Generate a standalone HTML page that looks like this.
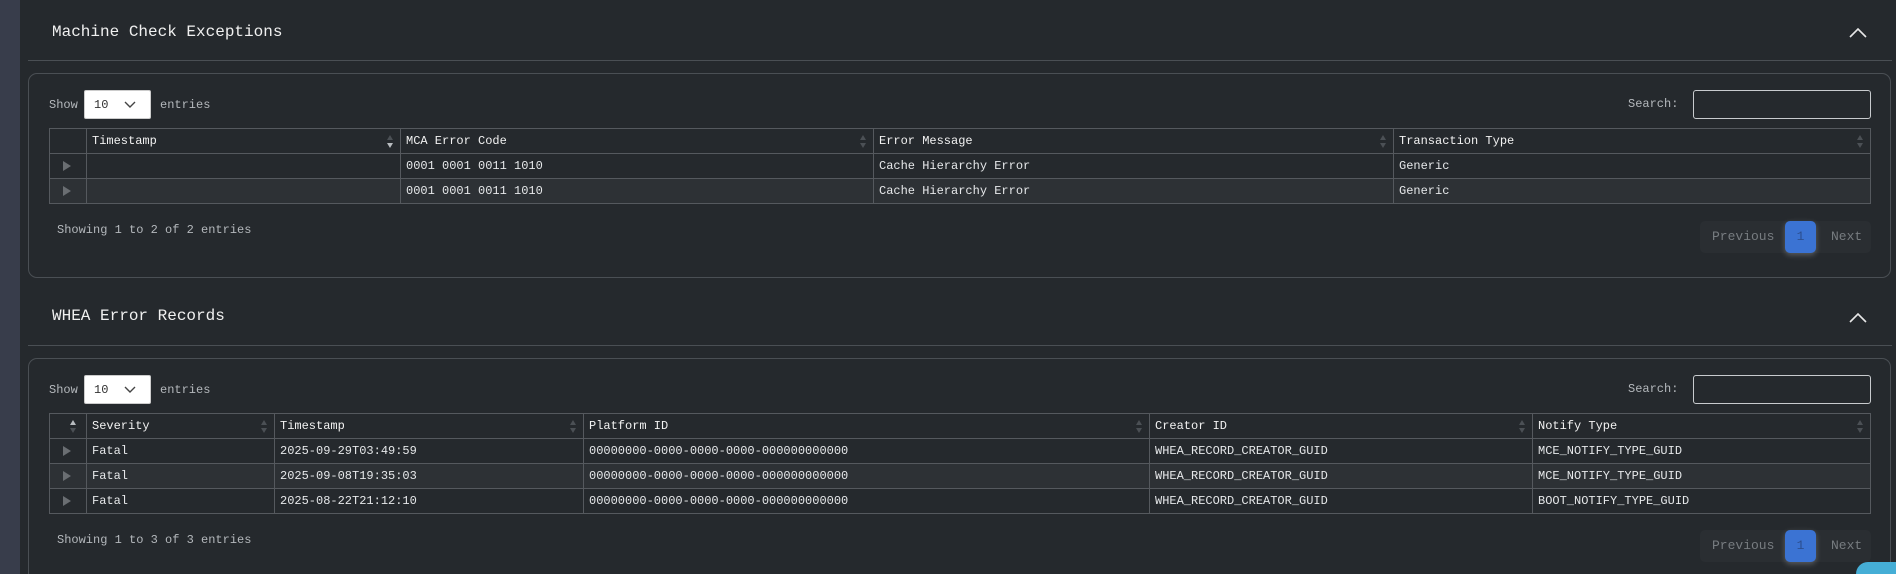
<!DOCTYPE html>
<html><head><style>
*{box-sizing:border-box;margin:0;padding:0}
html,body{width:1896px;height:574px;overflow:hidden}
body{background:#25292d;font-family:"Liberation Mono",monospace;color:#e6e8ea}
#wrap{position:relative;width:1896px;height:574px;overflow:hidden}
.side{position:absolute;left:0;top:0;width:20px;height:574px;background:#383d4b}
.abs{position:absolute}
.title{font-size:16px;color:#f0f0f0;left:52px}
.rule{left:28px;width:1864px;height:1px;background:#4a4f54}
.card{left:28px;width:1863px;border:1px solid #4a4f54;border-radius:9px}
.lbl{font-size:12px;color:#b4b8bc}
.sel{background:#fff;border:1px solid #ccc;border-radius:2px;width:67px;height:29px;color:#333;font-size:12px;padding:7px 0 0 9px}
.sel svg{position:absolute;right:14px;top:10px}
.inp{border:1px solid #c8cbce;border-radius:3px;width:178px;height:29px}
table{position:absolute;border-collapse:collapse;font-size:12px;table-layout:fixed}
td,th{border:1px solid #55595e;height:25px;padding:0 5px;text-align:left;font-weight:normal;white-space:nowrap;position:relative}
th{color:#f2f2f2}
tr.alt td{background:#2d3135}
.tri{width:0;height:0;border-left:8px solid #6a6e72;border-top:5px solid transparent;border-bottom:5px solid transparent;margin-left:8px}
.s{position:absolute;right:6px;top:6px;width:7px;height:13px}
.s:before{content:"";position:absolute;top:0;left:0;border-left:3.5px solid transparent;border-right:3.5px solid transparent;border-bottom:5px solid #4b5055}
.s:after{content:"";position:absolute;bottom:0;left:0;border-left:3.5px solid transparent;border-right:3.5px solid transparent;border-top:5px solid #4b5055}
.s.dn:after{border-top-color:#b8bcc0}
.s.up:before{border-bottom-color:#b8bcc0}
.pag{width:171px;height:32px;background:#2a2e32;border-radius:5px;font-size:13px;color:#777c80}
.pag span{position:absolute;top:8px}
.pag .one{left:85px;top:0;width:31px;height:32px;background:#3b73d3;border-radius:5px;color:#2c4f8f;text-align:center;padding-top:8px;box-shadow:0 2px 6px rgba(255,255,255,.25)}
</style></head><body><div id="wrap">
<div class="side"></div>

<div class="abs title" style="top:23px">Machine Check Exceptions</div>
<svg class="abs" style="left:1849px;top:27px" width="18" height="11"><path d="M1 10 L9 2 L17 10" fill="none" stroke="#e8e8e8" stroke-width="1.6"/></svg>
<div class="abs rule" style="top:60px"></div>
<div class="abs card" style="top:73px;height:205px"></div>
<div class="abs lbl" style="left:49px;top:98px">Show</div>
<div class="abs sel" style="left:84px;top:90px">10<svg width="12" height="8"><path d="M1 1 L6 6 L11 1" fill="none" stroke="#444" stroke-width="1.4"/></svg></div>
<div class="abs lbl" style="left:160px;top:98px">entries</div>
<div class="abs lbl" style="left:1628px;top:97px">Search:</div>
<div class="abs inp" style="left:1693px;top:90px"></div>
<table style="left:49px;top:128px;width:1822px">
<colgroup><col style="width:37px"><col style="width:314px"><col style="width:473px"><col style="width:520px"><col></colgroup>
<tr><th></th><th>Timestamp<i class="s dn"></i></th><th>MCA Error Code<i class="s"></i></th><th>Error Message<i class="s"></i></th><th>Transaction Type<i class="s"></i></th></tr>
<tr><td><div class="tri"></div></td><td></td><td>0001 0001 0011 1010</td><td>Cache Hierarchy Error</td><td>Generic</td></tr>
<tr class="alt"><td><div class="tri"></div></td><td></td><td>0001 0001 0011 1010</td><td>Cache Hierarchy Error</td><td>Generic</td></tr>
</table>
<div class="abs lbl" style="left:57px;top:223px">Showing 1 to 2 of 2 entries</div>
<div class="abs pag" style="left:1700px;top:221px"><span style="left:12px">Previous</span><div class="abs one">1</div><span style="left:131px">Next</span></div>

<div class="abs title" style="top:307px">WHEA Error Records</div>
<svg class="abs" style="left:1849px;top:312px" width="18" height="11"><path d="M1 10 L9 2 L17 10" fill="none" stroke="#e8e8e8" stroke-width="1.6"/></svg>
<div class="abs rule" style="top:345px"></div>
<div class="abs card" style="top:358px;height:216px;border-bottom:none;border-radius:9px 9px 0 0"></div>
<div class="abs lbl" style="left:49px;top:383px">Show</div>
<div class="abs sel" style="left:84px;top:375px">10<svg width="12" height="8"><path d="M1 1 L6 6 L11 1" fill="none" stroke="#444" stroke-width="1.4"/></svg></div>
<div class="abs lbl" style="left:160px;top:383px">entries</div>
<div class="abs lbl" style="left:1628px;top:382px">Search:</div>
<div class="abs inp" style="left:1693px;top:375px"></div>
<table style="left:49px;top:413px;width:1822px">
<colgroup><col style="width:37px"><col style="width:188px"><col style="width:309px"><col style="width:566px"><col style="width:383px"><col></colgroup>
<tr><th><i class="s up" style="right:9px"></i></th><th>Severity<i class="s"></i></th><th>Timestamp<i class="s"></i></th><th>Platform ID<i class="s"></i></th><th>Creator ID<i class="s"></i></th><th>Notify Type<i class="s"></i></th></tr>
<tr><td><div class="tri"></div></td><td>Fatal</td><td>2025-09-29T03:49:59</td><td>00000000-0000-0000-0000-000000000000</td><td>WHEA_RECORD_CREATOR_GUID</td><td>MCE_NOTIFY_TYPE_GUID</td></tr>
<tr class="alt"><td><div class="tri"></div></td><td>Fatal</td><td>2025-09-08T19:35:03</td><td>00000000-0000-0000-0000-000000000000</td><td>WHEA_RECORD_CREATOR_GUID</td><td>MCE_NOTIFY_TYPE_GUID</td></tr>
<tr><td><div class="tri"></div></td><td>Fatal</td><td>2025-08-22T21:12:10</td><td>00000000-0000-0000-0000-000000000000</td><td>WHEA_RECORD_CREATOR_GUID</td><td>BOOT_NOTIFY_TYPE_GUID</td></tr>
</table>
<div class="abs lbl" style="left:57px;top:533px">Showing 1 to 3 of 3 entries</div>
<div class="abs pag" style="left:1700px;top:530px"><span style="left:12px">Previous</span><div class="abs one">1</div><span style="left:131px">Next</span></div>
<div class="abs" style="left:1856px;top:562px;width:40px;height:12px;border-radius:20px 0 0 0;background:#45aed6"></div>
</div></body></html>
